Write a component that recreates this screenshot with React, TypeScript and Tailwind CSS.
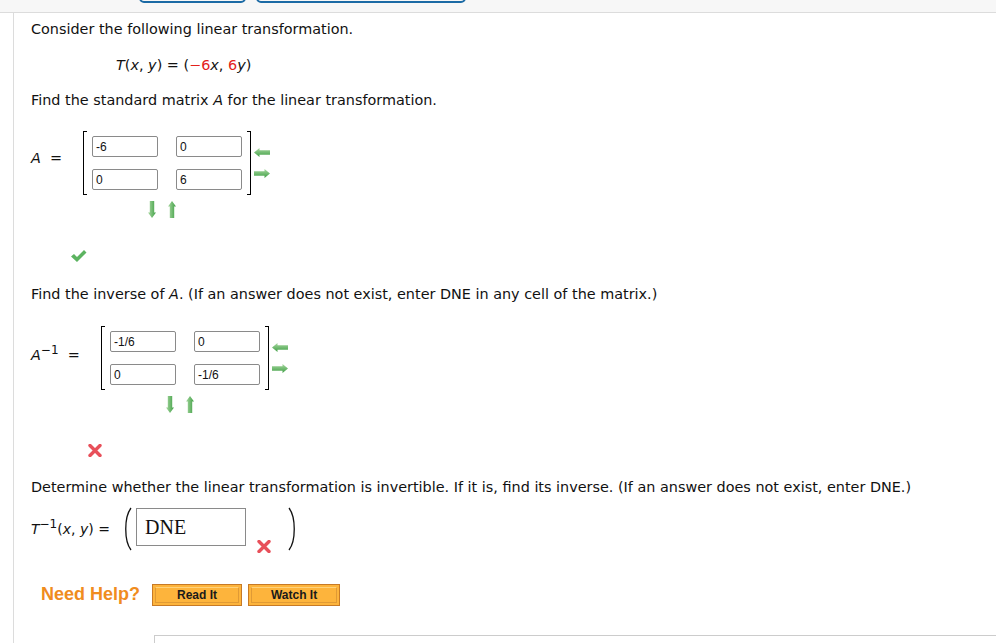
const body = { fontFamily: '"DejaVu Sans", Verdana, sans-serif' };
const arial = { fontFamily: '"Liberation Sans", Arial, sans-serif' };
const serif = { fontFamily: '"Liberation Serif", "Times New Roman", serif' };

function ArrowLeft() {
  return (
    <svg width="16" height="9" viewBox="0 0 16 9">
      <defs>
        <linearGradient id="gl" x1="0" y1="0" x2="0" y2="1">
          <stop offset="0" stopColor="#a8d8a0" />
          <stop offset="1" stopColor="#3f9f45" />
        </linearGradient>
      </defs>
      <path d="M0 4.5 L5.5 0 L5.5 2.3 L16 2.3 L16 6.7 L5.5 6.7 L5.5 9 Z" fill="url(#gl)" />
    </svg>
  );
}

function ArrowRight() {
  return (
    <svg width="16" height="9" viewBox="0 0 16 9">
      <path d="M16 4.5 L10.5 0 L10.5 2.3 L0 2.3 L0 6.7 L10.5 6.7 L10.5 9 Z" fill="url(#gl)" />
    </svg>
  );
}

function ArrowDown() {
  return (
    <svg width="8" height="17" viewBox="0 0 8 17">
      <defs>
        <linearGradient id="gv" x1="0" y1="0" x2="1" y2="0">
          <stop offset="0" stopColor="#a8d8a0" />
          <stop offset="1" stopColor="#3f9f45" />
        </linearGradient>
      </defs>
      <path d="M4 17 L0 11.5 L1.8 11.5 L1.8 0 L6.2 0 L6.2 11.5 L8 11.5 Z" fill="url(#gv)" />
    </svg>
  );
}

function ArrowUp() {
  return (
    <svg width="8" height="17" viewBox="0 0 8 17">
      <path d="M4 0 L0 5.5 L1.8 5.5 L1.8 17 L6.2 17 L6.2 5.5 L8 5.5 Z" fill="url(#gv)" />
    </svg>
  );
}

function Check() {
  return (
    <svg width="17" height="14" viewBox="0 0 17 14">
      <path d="M1 7.5 L4 5 L7 8 L14 1 L16.5 3.5 L7 13 Z" fill="#5cb360" />
    </svg>
  );
}

function Cross() {
  return (
    <svg width="14" height="13" viewBox="0 0 14 13">
      <path d="M2 1.5 L12 11.5 M12 1.5 L2 11.5" stroke="#e8505a" strokeWidth="3.4" strokeLinecap="round" />
    </svg>
  );
}

function Paren({ right = false }: { right?: boolean }) {
  return (
    <svg width="9" height="44" viewBox="0 0 9 44" className={right ? 'scale-x-[-1]' : ''}>
      <path d="M8 1 C1 10 1 34 8 43" fill="none" stroke="#111" strokeWidth="1.3" />
    </svg>
  );
}

function Cell({ value }: { value: string }) {
  return (
    <div
      className="flex h-[21px] w-[66px] items-center rounded-[2px] border border-[#8a8a8a] bg-white px-[3px] text-[12px] text-[#111]"
      style={arial}
    >
      {value}
    </div>
  );
}

function Matrix({ cells }: { cells: string[] }) {
  return (
    <div className="flex flex-col items-center">
      <div className="flex items-start">
        <div className="flex">
          <div className="w-[4px] border-y border-l border-black" />
          <div className="grid grid-cols-2 gap-x-[18px] gap-y-[12px] px-[5px] py-[5px]">
            {cells.map((c, i) => (
              <Cell key={i} value={c} />
            ))}
          </div>
          <div className="w-[4px] border-y border-r border-black" />
        </div>
        <div className="ml-[3px] flex flex-col gap-[12px] pt-[17px]">
          <ArrowLeft />
          <ArrowRight />
        </div>
      </div>
      <div className="mt-[6px] mr-[30px] flex gap-[12px]">
        <ArrowDown />
        <ArrowUp />
      </div>
    </div>
  );
}

function HelpButton({ label }: { label: string }) {
  return (
    <div className="h-[22px] border border-[#c77a26] bg-[#fdb43c] p-[2px]">
      <div
        className="flex h-full items-center justify-center border border-[#e09a35] border-t-[#ffd27a] text-[12px] font-bold text-[#1a1a1a]"
        style={arial}
      >
        {label}
      </div>
    </div>
  );
}

export default function App() {
  return (
    <div className="flex min-h-[643px] w-[996px] flex-col overflow-hidden bg-white text-[14.4px] text-[#111]" style={body}>
      <div className="relative h-[13px] shrink-0 overflow-hidden border-b border-[#dcdcdc] bg-[#f7f7f7]">
        <div className="absolute -top-[10px] left-[139px] h-[13px] w-[107px] rounded-[5px] border-2 border-[#1b6aa5]" />
        <div className="absolute -top-[10px] left-[256px] h-[13px] w-[210px] rounded-[5px] border-2 border-[#1b6aa5]" />
      </div>

      <div className="ml-[13px] flex flex-1 flex-col border-l border-[#dcdcdc] pl-[17px]">
        <p className="mt-[6px] leading-[20px]">Consider the following linear transformation.</p>
        <p className="mt-[16px] pl-[85px] leading-[20px]">
          <i>T</i>(<i>x</i>, <i>y</i>) = (<span className="text-[#e3211c]">−6</span><i>x</i>,{' '}
          <span className="text-[#e3211c]">6</span>
          <i>y</i>)
        </p>
        <p className="mt-[15px] leading-[20px]">
          Find the standard matrix <i>A</i> for the linear transformation.
        </p>

        <div className="mt-[21px] flex items-start">
          <div className="w-[52px] pt-[17px] leading-[20px]">
            <i>A</i>&nbsp; =
          </div>
          <Matrix cells={['-6', '0', '0', '6']} />
        </div>

        <div className="mt-[31px] pl-[39px]">
          <Check />
        </div>

        <p className="mt-[21px] leading-[20px]">
          Find the inverse of <i>A</i>. (If an answer does not exist, enter DNE in any cell of the matrix.)
        </p>

        <div className="mt-[22px] flex items-start">
          <div className="w-[70px] pt-[19px] leading-[20px]">
            <i>A</i>
            <sup className="text-[12px]">−1</sup>&nbsp; =
          </div>
          <Matrix cells={['-1/6', '0', '0', '-1/6']} />
        </div>

        <div className="mt-[31px] pl-[57px]">
          <Cross />
        </div>

        <p className="mt-[20px] leading-[20px]">
          Determine whether the linear transformation is invertible. If it is, find its inverse. (If an answer does not
          exist, enter DNE.)
        </p>

        <div className="mt-[10px] flex items-start">
          <div className="w-[92px] pt-[12px] leading-[20px] text-[14px]">
            <i>T</i>
            <sup className="text-[12px]">−1</sup>(<i>x</i>, <i>y</i>)&nbsp;=
          </div>
          <div>
            <Paren />
          </div>
          <div className="ml-[4px] mt-[1px] flex h-[38px] w-[110px] items-center border border-[#8a8a8a] pl-[8px] text-[20px]" style={serif}>
            DNE
          </div>
          <div className="ml-[11px] mt-[33px]">
            <Cross />
          </div>
          <div className="ml-[17px]">
            <Paren right />
          </div>
        </div>

        <div className="mt-[28px] flex items-center pl-[10px]">
          <span className="text-[18px] font-bold text-[#f08c1e]" style={arial}>
            Need Help?
          </span>
          <div className="ml-[12px] w-[90px]">
            <HelpButton label="Read It" />
          </div>
          <div className="ml-[6px] w-[92px]">
            <HelpButton label="Watch It" />
          </div>
        </div>

        <div className="ml-[123px] mt-[27px] h-[20px] flex-1 border-l border-t border-[#cccccc]" />
      </div>
    </div>
  );
}
